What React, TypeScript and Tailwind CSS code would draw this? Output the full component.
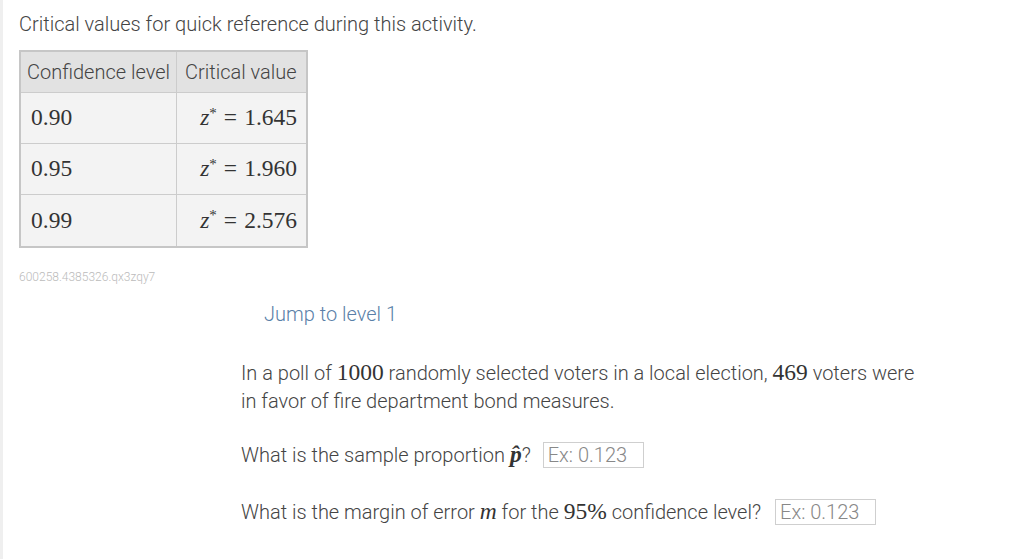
const serif = "font-['Liberation_Serif','DejaVu_Serif',serif]";

function M({ children, italic = false }: { children: React.ReactNode; italic?: boolean }) {
  return (
    <span className={`${serif} text-[23.5px] font-normal text-[#333] ${italic ? 'italic' : ''}`}>{children}</span>
  );
}

const rows = [
  { level: '0.90', value: '1.645' },
  { level: '0.95', value: '1.960' },
  { level: '0.99', value: '2.576' },
];

function AnswerBox({ gap }: { gap: string }) {
  return (
    <input
      placeholder="Ex: 0.123"
      className={`${gap} h-[26px] w-[101px] border border-[#cfcfcf] bg-white px-[4px] text-[20px] font-light text-[#333] outline-none placeholder:text-[#888]`}
    />
  );
}

export default function App() {
  return (
    <div className="min-h-[559px] w-[1036px] bg-white font-['Roboto','Liberation_Sans',sans-serif] font-light text-[#444]">
      <div className="flex min-h-[559px] border-l-[3px] border-[#efefef]">
        <div className="flex-1 pl-[16px] pt-[10px]">
          <p className="text-[20px] leading-[28px] text-[#444]">
            Critical values for quick reference during this activity.
          </p>

          <div className="mt-[12px] w-[289px] border-2 border-[#c6c6c6] bg-[#f3f3f3]">
            <div className="flex h-[41px] border-b border-[#cccccc] bg-[#e2e2e2] text-[20px] text-[#444]">
              <div className="flex w-[156px] items-center border-r border-[#cccccc] pl-[6px]">Confidence level</div>
              <div className="flex flex-1 items-center pl-[8px]">Critical value</div>
            </div>
            {rows.map((r, i) => (
              <div
                key={r.level}
                className={`flex h-[51px] ${i < rows.length - 1 ? 'border-b border-[#cccccc]' : 'h-[50px]'}`}
              >
                <div className="flex w-[156px] items-center border-r border-[#cccccc] pl-[10px]">
                  <M>{r.level}</M>
                </div>
                <div className="flex flex-1 items-center justify-end pr-[9px]">
                  <M>
                    <span className="italic">z</span>
                    <sup className="text-[15px]">*</sup>
                    <span className="px-[7px]">=</span>
                    {r.value}
                  </M>
                </div>
              </div>
            ))}
          </div>

          <p className="mt-[21px] text-[12px] leading-[16px] text-[#bbbbbb]">600258.4385326.qx3zqy7</p>

          <div className="pl-[222px]">
            <p className="mt-[15px] pl-[23px] text-[20px] leading-[28px] text-[#5a7fa8]">Jump to level 1</p>

            <p className="mt-[30px] text-[20px] leading-[28px] text-[#444]">
              In a poll of <M>1000</M> randomly selected voters in a local election, <M>469</M> voters were
              <br />
              in favor of fire department bond measures.
            </p>

            <div className="mt-[25px] flex items-center text-[20px] leading-[28px]">
              <span>
                What is the sample proportion{' '}
                <M italic>
                  <span className="font-bold">p̂</span>
                </M>
                ?
              </span>
              <AnswerBox gap="ml-[12px]" />
            </div>

            <div className="mt-[28px] flex items-center text-[20px] leading-[28px]">
              <span>
                What is the margin of error <M italic>m</M> for the <M>95%</M> confidence level?
              </span>
              <AnswerBox gap="ml-[14px]" />
            </div>
          </div>
        </div>
      </div>
    </div>
  );
}
